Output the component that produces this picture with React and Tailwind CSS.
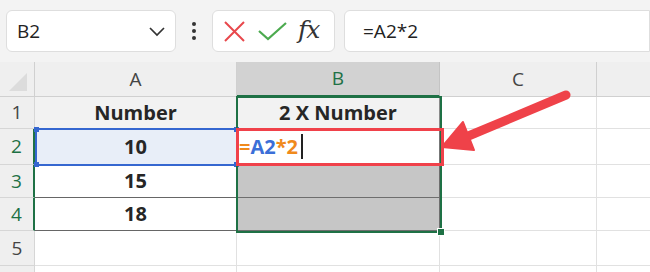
import React from "react";

const gridLine = "border-r border-b border-[#e1e1e1]";
const rowHead = "flex items-center justify-center bg-[#efefef] border-r border-b border-[#d6d6d6] text-[19px] text-[#444]";
const rowHeadSel = "flex items-center justify-center bg-[#efefef] border-b border-[#d6d6d6] border-r-2 border-r-[#1e7145] text-[19px] text-[#1e7145]";
const boldCell = "flex items-center justify-center text-[20px] font-bold text-[#262626]";

const App = () => {
  return (
    <div className="relative w-[650px] h-[272px] overflow-hidden bg-white font-['Open_Sans','Liberation_Sans',sans-serif]">
      {/* toolbar */}
      <div className="flex items-center h-[62px] bg-[#f3f3f3] pl-[6px]">
        <div className="flex items-center justify-between w-[170px] h-[42px] bg-white border border-[#dedede] rounded-[6px] pl-[10px] pr-[9px]">
          <span className="text-[19px] text-[#222]">B2</span>
          <svg width="18" height="12" viewBox="0 0 18 12">
            <polyline points="2,3 9,10 16,3" fill="none" stroke="#333" strokeWidth="1.7" />
          </svg>
        </div>
        <div className="flex flex-col items-center gap-[3px] w-[36px]">
          <span className="w-[4px] h-[4px] rounded-full bg-[#333]" />
          <span className="w-[4px] h-[4px] rounded-full bg-[#333]" />
          <span className="w-[4px] h-[4px] rounded-full bg-[#333]" />
        </div>
        <div className="flex items-center gap-[12px] w-[123px] h-[42px] bg-white border border-[#dedede] rounded-[6px] pl-[10px]">
          <svg width="23" height="23" viewBox="0 0 23 23">
            <path d="M2 2 L21 21 M21 2 L2 21" stroke="#e8484c" strokeWidth="2" fill="none" />
          </svg>
          <svg width="30" height="20" viewBox="0 0 30 20">
            <polyline points="1,10 10,18 28,2" fill="none" stroke="#4caa4f" strokeWidth="2.2" />
          </svg>
          <span className="font-['DejaVu_Serif',serif] italic text-[25px] leading-none text-[#333] -mt-[4px] -ml-[2px] tracking-[-1px]">fx</span>
        </div>
        <div className="flex items-center flex-1 h-[42px] ml-[9px] bg-white border border-[#dedede] rounded-l-[6px] pl-[18px]">
          <span className="text-[19px] text-[#222]">=A2*2</span>
        </div>
      </div>

      {/* sheet */}
      <div className="grid grid-cols-[35px_202px_203px_157px_1fr] grid-rows-[35px_32px_36px_33px_33px_35px_1fr] h-[210px]">
        {/* header row */}
        <div className="relative bg-[#efefef] border-r border-b border-[#d0d0d0]">
          <div className="absolute right-[7px] bottom-[5px] w-0 h-0 border-l-[18px] border-l-transparent border-b-[18px] border-b-[#dcdcdc]" />
        </div>
        <div className="flex items-center justify-center bg-[#efefef] border-r border-b border-[#d0d0d0] text-[19px] text-[#444]">A</div>
        <div className="flex items-center justify-center bg-[#d2d2d2] border-r border-[#c4c4c4] border-b-2 border-b-[#1e7145] text-[19px] text-[#1e7145]">B</div>
        <div className="flex items-center justify-center bg-[#efefef] border-r border-b border-[#d0d0d0] text-[19px] text-[#444]">C</div>
        <div className="bg-[#efefef] border-b border-[#d0d0d0]" />

        {/* row 1 */}
        <div className={rowHead}>1</div>
        <div className={`${boldCell} bg-[#f2f2f2] border-r border-b border-[#8a8a8a]`}>Number</div>
        <div className={`${boldCell} bg-[#f2f2f2] border-r border-b border-[#8a8a8a]`}>2 X Number</div>
        <div className={gridLine} />
        <div className="border-b border-[#e1e1e1]" />

        {/* row 2 */}
        <div className={rowHeadSel}>2</div>
        <div className={`${boldCell} bg-[#e8eef8] border-r border-b border-[#777]`}>10</div>
        <div className="flex items-center pl-[2px] text-[20px] font-bold border-r border-b border-[#777]">
          <span className="text-[#f08a1c]">=</span>
          <span className="text-[#3b6fd8]">A2</span>
          <span className="text-[#f08a1c]">*2</span>
          <span className="ml-[3px] w-[2px] h-[25px] bg-[#222]" />
        </div>
        <div className={gridLine} />
        <div className="border-b border-[#e1e1e1]" />

        {/* row 3 */}
        <div className={rowHeadSel}>3</div>
        <div className={`${boldCell} border-r border-b border-[#666]`}>15</div>
        <div className="bg-[#c6c6c6] border-r border-b border-[#6e6e6e]" />
        <div className={gridLine} />
        <div className="border-b border-[#e1e1e1]" />

        {/* row 4 */}
        <div className={rowHeadSel}>4</div>
        <div className={`${boldCell} border-r border-b border-[#666]`}>18</div>
        <div className="bg-[#c6c6c6] border-r border-b border-[#6e6e6e]" />
        <div className={gridLine} />
        <div className="border-b border-[#e1e1e1]" />

        {/* row 5 */}
        <div className={rowHead}>5</div>
        <div className={gridLine} />
        <div className={gridLine} />
        <div className={gridLine} />
        <div className="border-b border-[#e1e1e1]" />

        {/* row 6 */}
        <div className="bg-[#efefef] border-r border-[#d6d6d6]" />
        <div className="border-r border-[#e1e1e1]" />
        <div className="border-r border-[#e1e1e1]" />
        <div className="border-r border-[#e1e1e1]" />
        <div />
      </div>

      {/* reference box around A2 */}
      <div className="absolute left-[35px] top-[128px] w-[203px] h-[38px] border-2 border-[#3567d0]">
        <span className="absolute -left-[3px] -top-[3px] w-[5px] h-[5px] bg-[#3567d0]" />
        <span className="absolute -right-[3px] -top-[3px] w-[5px] h-[5px] bg-[#3567d0]" />
        <span className="absolute -left-[3px] -bottom-[3px] w-[5px] h-[5px] bg-[#3567d0]" />
        <span className="absolute -right-[3px] -bottom-[3px] w-[5px] h-[5px] bg-[#3567d0]" />
      </div>

      {/* selection B1:B4 */}
      <div className="absolute left-[236px] top-[96px] w-[206px] h-[137px] border-2 border-[#1e7145]" />
      <div className="absolute left-[437px] top-[228px] w-[8px] h-[8px] bg-[#1e7145] border border-white" />

      {/* red highlight on B2 */}
      <div className="absolute left-[236px] top-[128px] w-[208px] h-[38px] border-[3px] border-[#f0414a]" />

      {/* arrow */}
      <svg className="absolute left-0 top-0 pointer-events-none" width="650" height="272" viewBox="0 0 650 272">
        <line x1="566" y1="95" x2="466" y2="137" stroke="#ef4249" strokeWidth="9" strokeLinecap="round" />
        <polygon points="442,147 463,122 474,150" fill="#ef4249" stroke="#ef4249" strokeWidth="2" strokeLinejoin="round" />
      </svg>
    </div>
  );
};

export default App;
